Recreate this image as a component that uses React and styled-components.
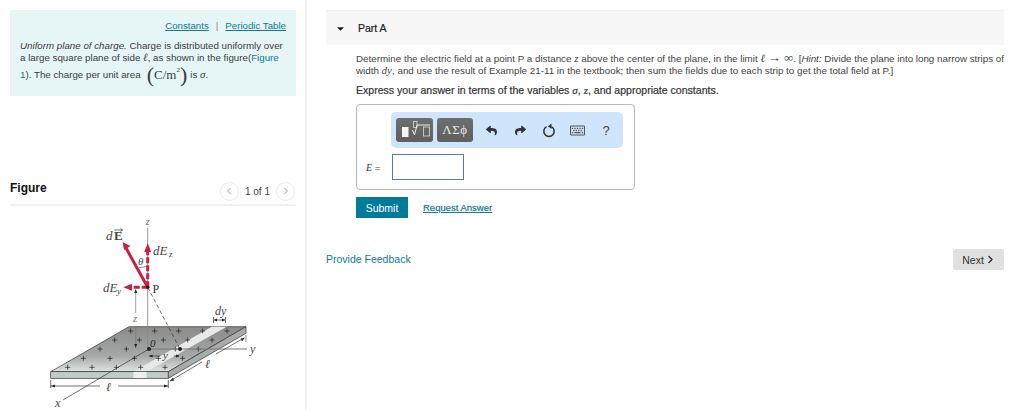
import React from 'react'
import styled, { createGlobalStyle } from 'styled-components'
import { FaReply, FaShare, FaRegKeyboard, FaChevronLeft, FaChevronRight, FaCaretDown } from 'react-icons/fa'

const GlobalStyle = createGlobalStyle`
  html, body { margin: 0; padding: 0; background: #fff; }
  body { font-family: "Liberation Sans", Arial, sans-serif; color: #3d3d3d; }
`

const Page = styled.div`
  width: 1024px;
  height: 410px;
  overflow: hidden;
  display: flex;
`

const Left = styled.aside`
  width: 286px;
  flex: none;
  padding: 10px 9px 0 10px;
  border-right: 2px solid #f0f1f3;
`

const Intro = styled.section`
  background: #e6f5f6;
  height: 86px;
  padding: 10px 10px 0;
  box-sizing: border-box;
  font-size: 9.75px;
`

const TopLinks = styled.div`
  display: flex;
  justify-content: flex-end;
  gap: 7px;
  font-size: 9.7px;
  line-height: 12px;
  color: #888;
  margin-bottom: 8px;
`

const A = styled.a`
  color: #0f7a92;
  text-decoration: ${p => (p.$plain ? 'none' : 'underline')};
`

const Line = styled.div`
  white-space: nowrap;
  line-height: 12px;
  display: flex;
  align-items: center;
  height: ${p => p.$h || 12}px;
  margin-top: ${p => p.$shift || 0}px;
  gap: 3px;
`

const M = styled.i`
  font-family: "Liberation Serif", "DejaVu Serif", serif;
  font-size: ${p => p.$size || 11}px;
  font-style: ${p => (p.$upright ? 'normal' : 'italic')};
  line-height: 0;
`

const Formula = styled.span`
  display: inline-flex;
  align-items: center;
  font-family: "Liberation Serif", serif;
  font-size: 13px;
  line-height: 14px;
  margin: 0 0 0 3px;
`

const Paren = styled.span`
  font-size: 22px;
  line-height: 18px;
  margin-top: 1px;
`

const Sup = styled.span`
  font-size: 7px;
  line-height: 7px;
  margin-top: -9px;
`

const FigureHead = styled.header`
  margin-top: 82px;
  height: 26px;
  display: flex;
  align-items: center;
  justify-content: space-between;
  border-bottom: 2px solid #f2f2f2;
`

const FigureTitle = styled.h2`
  margin: -6px 0 0;
  font-size: 12px;
  font-weight: 700;
  color: #111;
`

const Pager = styled.div`
  display: flex;
  align-items: center;
  gap: 6px;
  font-size: 10px;
  margin-right: 1px;
  color: #444;
`

const Circle = styled.span`
  width: 17px;
  height: 17px;
  border: 1px solid #ebebeb;
  border-radius: 50%;
  display: flex;
  align-items: center;
  justify-content: center;
  color: #c4c4c4;
  font-size: 8px;
`

const FigureWrap = styled.div`
  margin: -1px 0 0 20px;
`

const Right = styled.main`
  flex: 1;
  padding: 10px 20px 0 19px;
  min-width: 0;
`

const PartBar = styled.div`
  height: 34px;
  background: #f7f7f7;
  border-top: 1px solid #eee;
  display: flex;
  align-items: center;
  color: #222;
  font-size: 10.5px;
  -webkit-text-stroke: 0.2px #222;
`

const Caret = styled.span`
  width: 32px;
  padding-left: 9px;
  box-sizing: border-box;
  display: flex;
  color: #222;
  font-size: 11px;
`

const PartBody = styled.div`
  padding: 8px 0 0 30px;
`

const Para = styled.p`
  margin: 0;
  font-size: 9.8px;
  line-height: 12px;
  white-space: nowrap;
  color: #444;
`

const Express = styled.p`
  margin: 7px 0 0;
  font-size: 10.55px;
  line-height: 13px;
  color: #333;
  -webkit-text-stroke: 0.2px #333;
`

const AnswerBox = styled.div`
  width: 279px;
  height: 86px;
  box-sizing: border-box;
  margin-top: 7px;
  border: 1px solid #b9b9b9;
  border-radius: 4px;
  padding: 7px 0 0 34px;
`

const Toolbar = styled.div`
  width: 232px;
  height: 36px;
  background: #cfe5fb;
  border-radius: 5px;
  display: flex;
  align-items: center;
  padding-left: 5px;
  box-sizing: border-box;
  gap: 4px;
`

const ToolButton = styled.button`
  width: ${p => p.$w}px;
  height: 24px;
  border: 0;
  padding: 0;
  border-radius: 3px;
  background: linear-gradient(#6e6e6e, #5f5f5f);
  color: #e8e8e8;
  font-family: "Liberation Serif", "DejaVu Serif", serif;
  font-size: 13px;
  letter-spacing: 0.5px;
  display: flex;
  align-items: center;
  justify-content: center;
`

const Icon = styled.span`
  width: ${p => p.$w}px;
  flex: none;
  display: flex;
  align-items: center;
  justify-content: center;
  color: ${p => p.$color || '#333'};
  font-size: ${p => p.$size || 11}px;
`

const Equation = styled.div`
  display: flex;
  align-items: center;
  margin: 6px 0 0 -25px;
`

const EqLabel = styled.label`
  width: 26px;
  font-size: 9.5px;
  white-space: nowrap;
`

const Field = styled.div`
  width: 70px;
  height: 24px;
  border: 1px solid #5b7ba6;
`

const Actions = styled.div`
  display: flex;
  align-items: center;
  gap: 15px;
  margin-top: 7px;
`

const Submit = styled.button`
  width: 52px;
  height: 21px;
  background: #007c99;
  color: #fff;
  border: 0;
  padding: 0;
  font-family: inherit;
  font-size: 10.5px;
`

const RequestLink = styled(A)`
  font-size: 9.5px;
  margin-top: -1px;
  -webkit-text-stroke: 0.2px #0f7a92;
`

const Feedback = styled.div`
  display: flex;
  align-items: center;
  justify-content: space-between;
  margin-top: 31px;
  font-size: 10.5px;
`

const FeedbackLink = styled(A)`
  margin-top: -2px;
`

const Next = styled.button`
  width: 51px;
  height: 21px;
  background: #e0e0e0;
  border: 0;
  border-radius: 2px;
  padding: 0;
  color: #333;
  font-family: inherit;
  font-size: 10.5px;
  display: flex;
  align-items: center;
  justify-content: center;
  gap: 2px;
`

const pluses = [
  [302, 378], [374, 378], [446, 378], [518, 378], [591, 378],
  [254, 405], [328, 405], [400, 405], [473, 405], [546, 405],
  [210, 432], [289, 432], [436, 432], [505, 432],
  [160, 460], [240, 460], [313, 460], [385, 460], [458, 460],
  [113, 487], [186, 487], [259, 487], [332, 487], [405, 487],
]

const RED = '#c8203f'

const PlaneFigure = () => (
  <svg width="250" height="205" viewBox="0 0 250 205" fontFamily="Liberation Serif, serif" fontStyle="italic" fontSize="12" fill="#444">
    <defs>
      <linearGradient id="top" x1="0" y1="0" x2="0" y2="1">
        <stop offset="0" stopColor="#8b8b89" />
        <stop offset="0.65" stopColor="#a5a8a7" />
        <stop offset="1" stopColor="#dfe3e2" />
      </linearGradient>
    </defs>

    <line x1="117.7" y1="23" x2="117.7" y2="144" stroke="#999" strokeWidth="1" />
    <polygon points="20.7,166.7 99,121.7 216,121.7 138.3,166.7" fill="url(#top)" stroke="#333" strokeWidth="0.7" />
    <polygon points="103.3,166.7 116.7,166.7 196.7,121.7 181.7,121.7" fill="#e8e9e8" />
    <rect x="20.7" y="166.7" width="117.6" height="6.6" fill="#c3cbc8" stroke="#333" strokeWidth="0.7" />
    <rect x="103.5" y="167" width="13" height="6" fill="#eef0ef" />
    <polygon points="138.3,166.7 216,121.7 216,128.3 138.3,173.3" fill="#a6adab" stroke="#333" strokeWidth="0.7" />
    <line x1="117.7" y1="121" x2="117.7" y2="144" stroke="#888" strokeWidth="1" />

    {pluses.map(([x, y]) => (
      <path key={`${x}-${y}`} d={`M${x / 3 - 2.5} ${y / 3}h5M${x / 3} ${y / 3 - 2.5}v5`} stroke="#222" strokeWidth="0.7" />
    ))}

    <line x1="119" y1="144" x2="217" y2="144" stroke="#777" strokeWidth="1" />
    <line x1="119" y1="144" x2="33" y2="195" stroke="#333" strokeWidth="0.7" />
    <line x1="117.7" y1="82.3" x2="150" y2="144" stroke="#333" strokeWidth="0.7" strokeDasharray="4 2.5" />
    <circle cx="119" cy="144" r="2" fill="#222" />
    <circle cx="150" cy="144" r="2" fill="#222" />

    {/* field vectors */}
    <line x1="117.7" y1="82.3" x2="96" y2="43" stroke={RED} strokeWidth="3" />
    <polygon points="92.7,37.3 100.5,41 94,45" fill={RED} />
    <line x1="117.7" y1="82.3" x2="117.7" y2="47" stroke={RED} strokeWidth="3" strokeDasharray="6 2" />
    <polygon points="117.7,38.3 121.2,47 114.2,47" fill={RED} />
    <line x1="117.7" y1="82.3" x2="101" y2="82.3" stroke={RED} strokeWidth="3" strokeDasharray="6 2" />
    <polygon points="93.3,82.3 102,78.8 102,85.8" fill={RED} />
    <path d="M109 62.5Q114 62.5 117 61" stroke="#444" fill="none" strokeWidth="0.6" />
    <circle cx="117.7" cy="82.3" r="1.8" fill="#222" />

    {/* dimension lines */}
    <path d="M105.7 86V108M105.7 122V141" stroke="#777" strokeWidth="0.7" />
    <path d="M105.7 84l-1.5 4h3zM105.7 143l-1.5 -4h3z" fill="#222" />
    <path d="M183.5 112v6M195.5 112v6M184 115h11" stroke="#333" strokeWidth="0.7" />
    <path d="M184 115l3 -1.5v3zM195 115l-3 -1.5v3z" fill="#222" />
    <path d="M119 151H130M144 151H149" stroke="#333" strokeWidth="0.7" />
    <path d="M119 151l3.5 -1.5v3zM149.5 151l-3.5 -1.5v3z" fill="#222" />
    <path d="M20.7 175v8M138.3 175v8M21 181H70M88 181H138" stroke="#333" strokeWidth="0.7" />
    <path d="M21 181l4 -1.5v3zM138 181l-4 -1.5v3z" fill="#222" />
    <path d="M140 176L172 157M186 149L214 133" stroke="#333" strokeWidth="0.7" />
    <path d="M140 176l3 -3.2 1.4 2.6zM215 132.5l-4.4 1.2 1.4 2.6z" fill="#222" />
    <path d="M216 130v7" stroke="#555" strokeWidth="0.7" />

    {/* labels */}
    <text x="115.5" y="20" fill="#777" fontSize="11">z</text>
    <text x="76" y="35" fontSize="13">d</text>
    <text x="84" y="35" fontSize="13" fontStyle="normal" fontWeight="700">E</text>
    <path d="M84.5 25h8m-2 -1.5l2 1.5-2 1.5" stroke="#333" strokeWidth="0.7" fill="none" />
    <text x="123" y="50" fontSize="13">dE</text>
    <text x="139" y="52" fontSize="9">z</text>
    <text x="108" y="60" fontSize="11">θ</text>
    <text x="73" y="87" fontSize="13">dE</text>
    <text x="87" y="89" fontSize="9">y</text>
    <text x="122.5" y="88" fontSize="12" fontStyle="normal" fill="#333">P</text>
    <text x="103" y="117" fill="#777" fontSize="11">z</text>
    <text x="185" y="110" fontSize="12">dy</text>
    <text x="120" y="142" fontSize="11" fill="#222">0</text>
    <text x="133" y="154" fontSize="11">y</text>
    <text x="220" y="148" fontSize="12">y</text>
    <text x="175" y="163" fontSize="12">ℓ</text>
    <text x="76" y="186" fontSize="12">ℓ</text>
    <text x="25" y="202" fontSize="12">x</text>
  </svg>
)

const App = () => (
  <Page>
    <GlobalStyle />
    <Left>
      <Intro>
        <TopLinks>
          <A href="#">Constants</A>
          <span>|</span>
          <A href="#">Periodic Table</A>
        </TopLinks>
        <Line><span><i>Uniform plane of charge.</i> Charge is distributed uniformly over</span></Line>
        <Line><span>a large square plane of side <M>ℓ</M>, as shown in the figure(<A href="#" $plain>Figure</A></span></Line>
        <Line $h={23} $shift={-1}>
          <span><A href="#" $plain>1</A>). The charge per unit area</span>
          <Formula><Paren>(</Paren>C/m<Sup>2</Sup><Paren>)</Paren></Formula>
          <span>is <M>σ</M>.</span>
        </Line>
      </Intro>
      <FigureHead>
        <FigureTitle>Figure</FigureTitle>
        <Pager>
          <Circle><FaChevronLeft /></Circle>
          <span>1 of 1</span>
          <Circle><FaChevronRight /></Circle>
        </Pager>
      </FigureHead>
      <FigureWrap><PlaneFigure /></FigureWrap>
    </Left>
    <Right>
      <PartBar>
        <Caret><FaCaretDown /></Caret>
        Part A
      </PartBar>
      <PartBody>
        <Para>
          Determine the electric field at a point P a distance <M>z</M> above the center of the plane, in the limit <M>ℓ</M> <M $size={13} $upright>→ ∞</M>. [<i>Hint:</i> Divide the plane into long narrow strips of
        </Para>
        <Para>
          width <M>dy</M>, and use the result of Example 21-11 in the textbook; then sum the fields due to each strip to get the total field at P.]
        </Para>
        <Express>Express your answer in terms of the variables <M>σ</M>, <M>z</M>, and appropriate constants.</Express>
        <AnswerBox>
          <Toolbar>
            <ToolButton $w={37} aria-label="templates">
              <svg width="34" height="22" viewBox="0 0 34 22">
                <rect x="4" y="8" width="6.5" height="10" fill="#f4f4f4" />
                <rect x="15.5" y="2.5" width="3.5" height="6" fill="none" stroke="#ddd" strokeWidth="0.8" />
                <path d="M14.5 11l2 5 2.5 -10h13" fill="none" stroke="#eee" strokeWidth="1" />
                <rect x="25.5" y="8" width="6" height="9" fill="none" stroke="#ddd" strokeWidth="0.8" />
              </svg>
            </ToolButton>
            <ToolButton $w={36} aria-label="symbols">ΛΣϕ</ToolButton>
            <Icon $w={29}><FaReply /></Icon>
            <Icon $w={20}><FaShare /></Icon>
            <Icon $w={30}>
              <svg width="14" height="15" viewBox="0 0 14 15">
                <path d="M4.6 3.6a5.2 5.2 0 1 0 4.8 0" fill="none" stroke="#333" strokeWidth="1.5" />
                <polygon points="9.5,0.6 9.5,6 5.9,3.3" fill="#333" />
              </svg>
            </Icon>
            <Icon $w={18} $size={15} $color="#555"><FaRegKeyboard /></Icon>
            <Icon $w={32} $size={13} $color="#444">?</Icon>
          </Toolbar>
          <Equation>
            <EqLabel><M $size={10}>E</M> =</EqLabel>
            <Field />
          </Equation>
        </AnswerBox>
        <Actions>
          <Submit>Submit</Submit>
          <RequestLink href="#">Request Answer</RequestLink>
        </Actions>
      </PartBody>
      <Feedback>
        <FeedbackLink href="#" $plain>Provide Feedback</FeedbackLink>
        <Next>Next <FaChevronRight size={9} /></Next>
      </Feedback>
    </Right>
  </Page>
)

export default App
